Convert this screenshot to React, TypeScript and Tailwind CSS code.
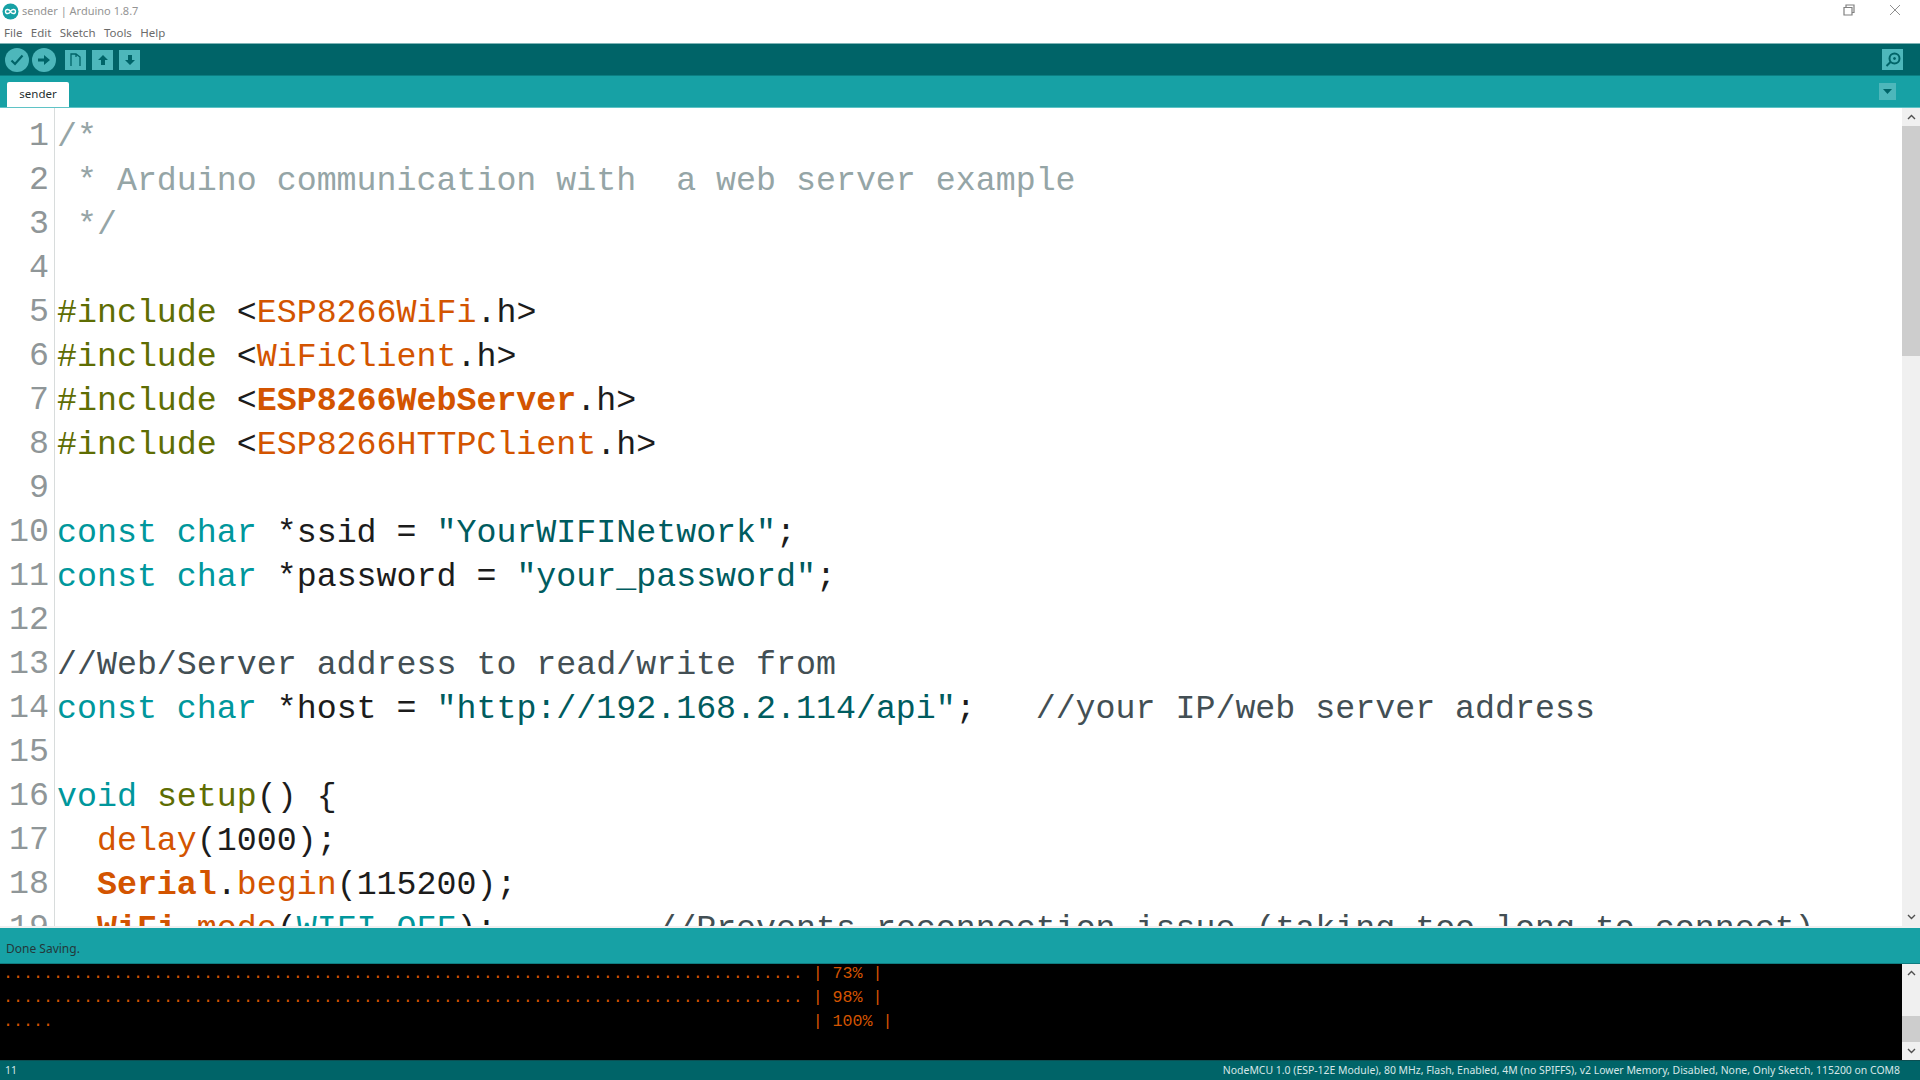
import React from "react";

type Seg = [string, string?];
const K = "text-[#00979c]";
const F = "text-[#d35400]";
const B = "text-[#d35400] font-bold";
const G = "text-[#5e6d03]";
const S = "text-[#005c5f]";
const C1 = "text-[#95a5a6]";
const C2 = "text-[#434f54]";

const include = (name: string, cls: string): Seg[] => [["#include", G], [" <"], [name, cls], [".h>"]];

const lines: Seg[][] = [
  [["/*", C1]],
  [[" * Arduino communication with  a web server example", C1]],
  [[" */", C1]],
  [],
  include("ESP8266WiFi", F),
  include("WiFiClient", F),
  include("ESP8266WebServer", B),
  include("ESP8266HTTPClient", F),
  [],
  [["const", K], [" "], ["char", K], [" *ssid = "], ['"YourWIFINetwork"', S], [";"]],
  [["const", K], [" "], ["char", K], [" *password = "], ['"your_password"', S], [";"]],
  [],
  [["//Web/Server address to read/write from", C2]],
  [["const", K], [" "], ["char", K], [" *host = "], ['"http://192.168.2.114/api"', S], [";   "], ["//your IP/web server address", C2]],
  [],
  [["void", K], [" "], ["setup", G], ["() {"]],
  [["  "], ["delay", F], ["(1000);"]],
  [["  "], ["Serial", B], ["."], ["begin", F], ["(115200);"]],
  [["  "], ["WiFi", B], ["."], ["mode", F], ["("], ["WIFI_OFF", K], [");        "], ["//Prevents reconnection issue (taking too long to connect)", C2]],
];

const dots = ".".repeat(80);
const consoleLines = [`${dots} | 73% |`, `${dots} | 98% |`, `${".....".padEnd(80, " ")} | 100% |`];

function Arrow({ up }: { up?: boolean }) {
  return (
    <div className="h-[18px] flex items-center justify-center">
      <svg width="9" height="6" viewBox="0 0 9 6" fill="none" stroke="#505050" strokeWidth="1.4">
        <path d={up ? "M1 5L4.5 1.5L8 5" : "M1 1L4.5 4.5L8 1"} />
      </svg>
    </div>
  );
}

function Scrollbar({ top, thumb, bg }: { top: string; thumb: string; bg: string }) {
  return (
    <div className={`w-[18px] shrink-0 flex flex-col ${bg}`}>
      <Arrow up />
      <div className="flex-1 flex flex-col">
        <div className={top} />
        <div className={`${thumb} bg-[#cdcdcd]`} />
      </div>
      <Arrow />
    </div>
  );
}

function RoundBtn({ children }: { children: React.ReactNode }) {
  return (
    <div className="w-[24px] h-[24px] rounded-full bg-[#4db7bb] flex items-center justify-center">{children}</div>
  );
}

function SquareBtn({ children }: { children: React.ReactNode }) {
  return <div className="w-[21px] h-[20px] bg-[#4db7bb] flex items-center justify-center">{children}</div>;
}

export default function App() {
  return (
    <div className="h-screen w-full flex flex-col bg-white overflow-hidden font-['Noto_Sans',sans-serif]">
      {/* Title + menu */}
      <div className="h-[43px] shrink-0 bg-white relative">
        <div className="h-[22px] flex items-center pl-[2px]">
          <svg width="17" height="17" viewBox="0 0 17 17">
            <circle cx="8.5" cy="8.5" r="8" fill="#17a1a5" />
            <path d="M3.5 8.5c0-3 4-2.5 5 0s5 3 5 0-4-2.5-5 0-5 3-5 0z" fill="none" stroke="#fff" strokeWidth="1.4" />
          </svg>
          <span className="ml-[3px] text-[11px] leading-[16px] text-[#949494]">sender | Arduino 1.8.7</span>
          <div className="ml-auto flex items-center -mt-[2px]">
            <svg width="12" height="12" viewBox="0 0 12 12" fill="none" stroke="#808080" strokeWidth="1.2" className="mr-[34px]">
              <path d="M1 3.5h8v7.5H1zM3 3.5V1h8v7.5H9" />
            </svg>
            <svg width="12" height="12" viewBox="0 0 12 12" fill="none" stroke="#909090" strokeWidth="1" className="mr-[19px]">
              <path d="M1 1l10 10M11 1L1 11" />
            </svg>
          </div>
        </div>
        <div className="h-[21px] flex items-center pl-[4px] gap-[8.4px] text-[11.5px] leading-[16px] text-[#6b6b6b]">
          <span>File</span>
          <span>Edit</span>
          <span>Sketch</span>
          <span>Tools</span>
          <span>Help</span>
        </div>
      </div>

      {/* Toolbar */}
      <div className="h-[33px] shrink-0 bg-[#006468] border-t border-[#7fb4b6] border-b border-b-[#0b7f83] flex items-center pl-[5px] pr-[17px]">
        <RoundBtn>
          <svg width="14" height="12" viewBox="0 0 14 12" fill="none" stroke="#006468" strokeWidth="2.2">
            <path d="M1.5 6.5L5 10L12.5 1.5" />
          </svg>
        </RoundBtn>
        <div className="ml-[3px]">
          <RoundBtn>
            <svg width="12" height="10" viewBox="0 0 12 10" fill="#006468">
              <path d="M0 3.5h6V0l6 5-6 5V6.500H0z" />
            </svg>
          </RoundBtn>
        </div>
        <div className="ml-[9px] flex gap-[6px]">
          <SquareBtn>
            <svg width="11" height="13" viewBox="0 0 11 13" fill="none" stroke="#006468" strokeWidth="1.3">
              <path d="M1 13V1h5l4 3v9M6 1v3" />
            </svg>
          </SquareBtn>
          <SquareBtn>
            <svg width="10" height="10" viewBox="0 0 10 10" fill="#006468">
              <path d="M5 0l5 5H7v5H3V5H0z" />
            </svg>
          </SquareBtn>
          <SquareBtn>
            <svg width="10" height="10" viewBox="0 0 10 10" fill="#006468">
              <path d="M3 0h4v5h3l-5 5-5-5h3z" />
            </svg>
          </SquareBtn>
        </div>
        <div className="ml-auto w-[21px] h-[21px] bg-[#4db7bb] flex items-center justify-center">
          <svg width="16" height="16" viewBox="0 0 16 16" fill="none" stroke="#006468" strokeWidth="2">
            <circle cx="9.500" cy="6.500" r="5" />
            <circle cx="9.500" cy="6.500" r="1" fill="#006468" strokeWidth="1" />
            <path d="M5.500 10L1.500 14" />
          </svg>
        </div>
      </div>

      {/* Tab bar */}
      <div className="h-[32px] shrink-0 bg-[#17a1a5] border-b border-[#5fc3c6] flex items-end pl-[7px] pr-[24px]">
        <div className="w-[62px] h-[25px] pb-[2px] bg-white rounded-t-[2px] flex items-center justify-center text-[11.5px] text-[#1f2f30]">
          sender
        </div>
        <div className="ml-auto self-center w-[17px] h-[17px] bg-[#4db7bb] flex items-center justify-center">
          <svg width="9" height="5" viewBox="0 0 9 5" fill="#006468">
            <path d="M0 0h9L4.500 5z" />
          </svg>
        </div>
      </div>

      {/* Editor */}
      <div className="h-[818px] shrink-0 flex bg-white">
        <div className="flex-1 min-w-0 flex overflow-hidden font-['Liberation_Mono',monospace] text-[33.29px] leading-[44px]">
          <div className="w-[55px] shrink-0 border-r border-[#d8dcdc] pt-[6px] pr-[5px] text-right text-[#8f9698]">
            {lines.map((_, i) => (
              <div key={i} className="h-[44px]">
                {i + 1}
              </div>
            ))}
          </div>
          <div className="flex-1 min-w-0 pt-[7px] pl-[2px] text-[#1c1c1c]">
            {lines.map((segs, i) => (
              <div key={i} className="h-[44px] whitespace-pre">
                {segs.map(([t, c], j) => (
                  <span key={j} className={c}>
                    {t}
                  </span>
                ))}
              </div>
            ))}
          </div>
        </div>
        <Scrollbar top="h-[0px]" thumb="h-[230px]" bg="bg-[#f0f0f0]" />
      </div>
      <div className="h-[2px] shrink-0 bg-[#f0f0f0]" />

      {/* Status */}
      <div className="h-[36px] shrink-0 bg-[#17a1a5] border-b border-[#0f7c80] flex items-center pl-[6px] pt-[7px] text-[12px] text-[#23383a]">
        Done Saving.
      </div>

      {/* Console */}
      <div className="h-[96px] shrink-0 flex bg-black">
        <div className="flex-1 min-w-0 overflow-hidden pl-[3px] font-['Liberation_Mono',monospace] text-[16.67px] leading-[24px] text-[#d35400]">
          <div className="-mt-[2px]">
            {consoleLines.map((l, i) => (
              <div key={i} className="h-[24px] whitespace-pre">
                {l}
              </div>
            ))}
          </div>
        </div>
        <Scrollbar top="h-[34px]" thumb="h-[26px]" bg="bg-[#f0f0f0]" />
      </div>

      {/* Footer */}
      <div className="flex-1 bg-[#006468] border-t border-[#0b4f52] flex items-center justify-between pl-[5px] pr-[20px] text-[10.44px] text-[#d5e6e7]">
        <span>11</span>
        <span>NodeMCU 1.0 (ESP-12E Module), 80 MHz, Flash, Enabled, 4M (no SPIFFS), v2 Lower Memory, Disabled, None, Only Sketch, 115200 on COM8</span>
      </div>
    </div>
  );
}
